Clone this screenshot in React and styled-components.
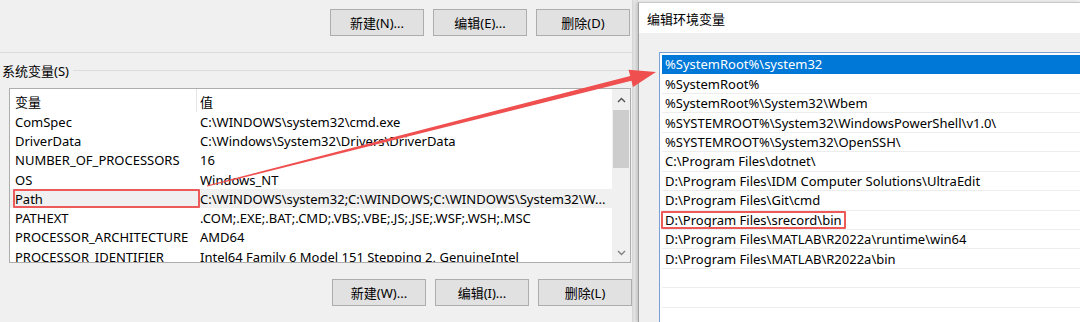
import React from "react";
import styled, { createGlobalStyle } from "styled-components";

const Global = createGlobalStyle`
  html, body { margin: 0; padding: 0; }
  body {
    background: #f0f0f0;
    font-family: "Noto Sans", "Noto Sans CJK SC", sans-serif;
    color: #000;
  }
`;

const FONT = `"Noto Sans", "Noto Sans CJK SC", sans-serif`;

const Page = styled.div`
  position: relative;
  width: 1080px;
  height: 322px;
  overflow: hidden;
  display: flex;
  background: #f0f0f0;
`;

const LeftPanel = styled.div`
  width: 632px;
  flex: none;
  display: flex;
  flex-direction: column;
`;

const ButtonRow = styled.div`
  display: flex;
  justify-content: flex-end;
  gap: 9px;
  padding: ${(p) => p.$pad};
`;

const Button = styled.div`
  width: 94px;
  height: 27px;
  box-sizing: border-box;
  border: 1px solid #adadad;
  background: #e1e1e1;
  display: flex;
  align-items: center;
  justify-content: center;
  font-family: ${FONT};
  font-size: 13px;
  color: #000;
`;

const Separator = styled.div`
  height: 1px;
  background: #dcdcdc;
  margin-top: 16px;
`;

const GroupHead = styled.div`
  display: flex;
  align-items: center;
  gap: 4px;
  margin-top: 7px;
  height: 20px;
  padding-left: 2px;
  font-size: 13px;
  color: #000;
  &::after {
    content: "";
    flex: 1;
    height: 1px;
    background: #dcdcdc;
  }
`;

const ListBox = styled.div`
  margin: 8px 1px 0 9px;
  height: 175px;
  box-sizing: border-box;
  border: 1px solid #adadad;
  background: #fff;
  display: flex;
  overflow: hidden;
`;

const ListBody = styled.div`
  flex: 1;
  display: flex;
  flex-direction: column;
  overflow: hidden;
`;

const HeaderRow = styled.div`
  display: grid;
  grid-template-columns: 186px 1fr;
  height: 23px;
  flex: none;
  font-size: 13px;
`;

const HeaderCell = styled.div`
  display: flex;
  align-items: center;
  padding-left: ${(p) => p.$pl}px;
  border-left: ${(p) => (p.$divider ? "1px solid #e5e5e5" : "none")};
  padding-top: 2px;
`;

const Row = styled.div`
  display: grid;
  grid-template-columns: 186px 1fr;
  height: 19.3px;
  flex: none;
  background: ${(p) => (p.$active ? "#f0f0f0" : "transparent")};
  font-size: 13px;
`;

const Cell = styled.div`
  position: relative;
  display: flex;
  align-items: center;
  padding-left: ${(p) => p.$pl}px;
  white-space: nowrap;
  overflow: ${(p) => (p.$marked ? "visible" : "hidden")};
`;

const Mark = styled.span`
  position: absolute;
  left: ${(p) => p.$l}px;
  right: ${(p) => p.$r}px;
  top: 0;
  bottom: 0;
  border: 2px solid #ec5a5a;
  border-radius: 1px;
  pointer-events: none;
`;

const ScrollBar = styled.div`
  width: 18px;
  flex: none;
  background: #f0f0f0;
  display: flex;
  flex-direction: column;
  align-items: stretch;
`;

const ScrollArrow = styled.div`
  height: 18px;
  display: flex;
  align-items: center;
  justify-content: center;
  margin-top: ${(p) => p.$mt || 0}px;
`;

const Thumb = styled.div`
  height: 58px;
  margin: 1px 1px 0 1px;
  background: #cdcdcd;
`;

const Filler = styled.div`
  flex: 1;
`;

const Frame = styled.div`
  width: 6px;
  flex: none;
  background: linear-gradient(to right, #d4d4d4, #e8e8e8 40%, #dedede);
`;

const Dialog = styled.div`
  flex: 1;
  margin-top: 2px;
  border-left: 1px solid #a0a0a0;
  border-top: 1px solid #c8c8c8;
  display: flex;
  flex-direction: column;
  background: #f0f0f0;
  box-shadow: -2px 0 4px rgba(0, 0, 0, 0.12);
  overflow: hidden;
`;

const TitleBar = styled.div`
  height: 30px;
  flex: none;
  background: #fff;
  display: flex;
  align-items: center;
  padding-left: 8px;
  font-size: 13px;
  color: #000;
`;

const PathList = styled.div`
  margin: 19px -20px 0 20px;
  flex: 1;
  min-height: 0;
  overflow: hidden;
  background: #fff;
  border: 1px solid #7aa0d6;
  border-bottom: none;
  padding: 2px 0 0 2px;
  display: flex;
  flex-direction: column;
`;

const PathRow = styled.div`
  height: 19.45px;
  flex: none;
  box-sizing: border-box;
  display: flex;
  align-items: center;
  padding-left: 1px;
  font-size: 13px;
  white-space: nowrap;
  background: ${(p) => (p.$selected ? "#0078d7" : "#fff")};
  color: ${(p) => (p.$selected ? "#fff" : "#000")};
  border-bottom: 1px solid ${(p) => (p.$selected ? "#0078d7" : "#ededed")};
`;

const PathText = styled.span`
  position: relative;
  padding: 0 2px;
`;

const ArrowLayer = styled.svg`
  position: absolute;
  left: 0;
  top: 0;
  pointer-events: none;
`;

const leftRows = [
  ["ComSpec", "C:\\WINDOWS\\system32\\cmd.exe"],
  ["DriverData", "C:\\Windows\\System32\\Drivers\\DriverData"],
  ["NUMBER_OF_PROCESSORS", "16"],
  ["OS", "Windows_NT"],
  ["Path", "C:\\WINDOWS\\system32;C:\\WINDOWS;C:\\WINDOWS\\System32\\W..."],
  ["PATHEXT", ".COM;.EXE;.BAT;.CMD;.VBS;.VBE;.JS;.JSE;.WSF;.WSH;.MSC"],
  ["PROCESSOR_ARCHITECTURE", "AMD64"],
  ["PROCESSOR_IDENTIFIER", "Intel64 Family 6 Model 151 Stepping 2, GenuineIntel"],
];

const paths = [
  "%SystemRoot%\\system32",
  "%SystemRoot%",
  "%SystemRoot%\\System32\\Wbem",
  "%SYSTEMROOT%\\System32\\WindowsPowerShell\\v1.0\\",
  "%SYSTEMROOT%\\System32\\OpenSSH\\",
  "C:\\Program Files\\dotnet\\",
  "D:\\Program Files\\IDM Computer Solutions\\UltraEdit",
  "D:\\Program Files\\Git\\cmd",
  "D:\\Program Files\\srecord\\bin",
  "D:\\Program Files\\MATLAB\\R2022a\\runtime\\win64",
  "D:\\Program Files\\MATLAB\\R2022a\\bin",
  "",
  "",
  "",
];

const Chevron = ({ up }) => (
  <svg width="9" height="6" viewBox="0 0 9 6">
    <polyline
      points={up ? "1,5 4.5,1.5 8,5" : "1,1 4.5,4.5 8,1"}
      fill="none"
      stroke={up ? "#505050" : "#808080"}
      strokeWidth="1.4"
    />
  </svg>
);

export default function App() {
  return (
    <>
      <Global />
      <Page>
        <LeftPanel>
          <ButtonRow $pad="9px 2px 0 0">
            <Button>新建(N)...</Button>
            <Button>编辑(E)...</Button>
            <Button>删除(D)</Button>
          </ButtonRow>
          <Separator />
          <GroupHead>系统变量(S)</GroupHead>
          <ListBox>
            <ListBody>
              <HeaderRow>
                <HeaderCell $pl={5}>变量</HeaderCell>
                <HeaderCell $pl={3} $divider>
                  值
                </HeaderCell>
              </HeaderRow>
              {leftRows.map(([k, v]) => {
                const marked = k === "Path";
                return (
                  <Row key={k} $active={marked}>
                    <Cell $pl={5} $marked={marked}>
                      {k}
                      {marked && <Mark $l={3} $r={-4} />}
                    </Cell>
                    <Cell $pl={4}>{v}</Cell>
                  </Row>
                );
              })}
            </ListBody>
            <ScrollBar>
              <ScrollArrow $mt={2}>
                <Chevron up />
              </ScrollArrow>
              <Thumb />
              <Filler />
              <ScrollArrow>
                <Chevron />
              </ScrollArrow>
            </ScrollBar>
          </ListBox>
          <ButtonRow $pad="16px 0 0 0">
            <Button>新建(W)...</Button>
            <Button>编辑(I)...</Button>
            <Button>删除(L)</Button>
          </ButtonRow>
        </LeftPanel>
        <Frame />
        <Dialog>
          <TitleBar>编辑环境变量</TitleBar>
          <PathList>
            {paths.map((p, i) => (
              <PathRow key={i} $selected={i === 0}>
                <PathText>
                  {p}
                  {p === "D:\\Program Files\\srecord\\bin" && <Mark $l={-2} $r={-2} />}
                </PathText>
              </PathRow>
            ))}
          </PathList>
        </Dialog>
        <ArrowLayer width="1080" height="322" viewBox="0 0 1080 322">
          <polygon
            points="206.8,185.4 630.2,76.0 628.6,69.7 656,72 633.0,87.1 631.4,80.8 207.2,186.6"
            fill="#ef4f4f"
          />
        </ArrowLayer>
      </Page>
    </>
  );
}
